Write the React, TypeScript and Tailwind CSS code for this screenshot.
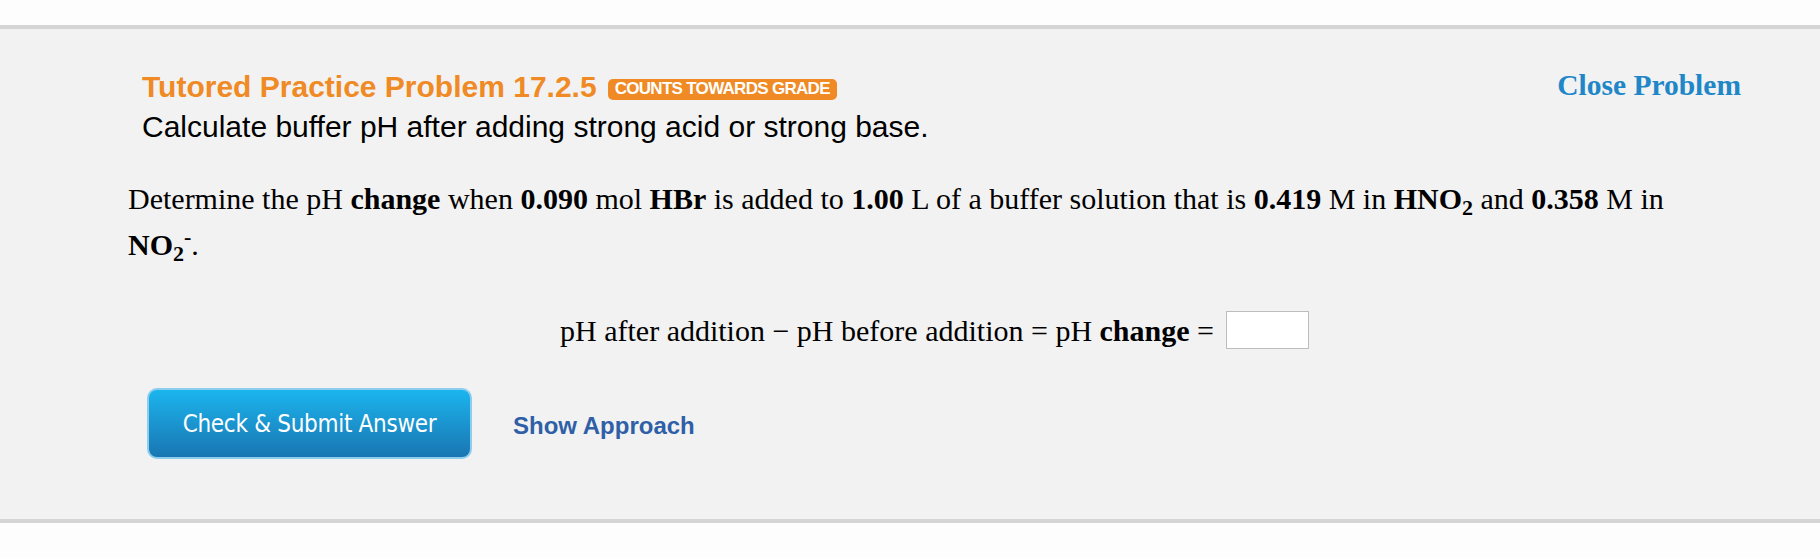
import React from 'react'

// ─────────────────────────────────────────────────────────
// Tutored practice problem panel
// ─────────────────────────────────────────────────────────

const SANS = 'font-["Liberation_Sans",Arial,sans-serif]'
const SERIF = 'font-["Liberation_Serif","Times_New_Roman",serif]'

export default function App() {
  return (
    <div className="min-h-screen bg-[#fdfdfd] pt-[25px]">
      <div className="h-[498px] border-y-4 border-[#d5d5d5] bg-[#f2f2f2]">
        <div className="pl-[128px] pr-[79px] pt-[38px]">
          {/* ── Header ─────────────────────────────── */}
          <div className="flex items-start justify-between">
            <div className={`pl-[14px] ${SANS}`}>
              <div className="flex items-center leading-[40px]">
                <h1 className="text-[30px] font-bold text-[#ef8a24]">
                  Tutored Practice Problem 17.2.5
                </h1>
                <span className="ml-[11px] mt-[4px] inline-flex h-[21px] items-center rounded-[5px] bg-[#ef8a24] px-[7px] text-[17px] font-bold tracking-[-0.7px] text-white">
                  COUNTS TOWARDS GRADE
                </span>
              </div>
              <p className="text-[30px] leading-[40px] text-black">
                Calculate buffer pH after adding strong acid or strong base.
              </p>
            </div>
            <button className={`-mt-[2px] text-[29.5px] font-bold leading-[40px] text-[#1f87c8] ${SERIF}`}>
              Close Problem
            </button>
          </div>

          {/* ── Problem statement ───────────────────── */}
          <p className={`mt-[29px] pr-[60px] text-[30px] leading-[46px] text-black ${SERIF}`}>
            Determine the pH <b>change</b> when <b>0.090</b> mol <b>HBr</b> is added to{' '}
            <b>1.00</b> L of a buffer solution that is <b>0.419</b> M in{' '}
            <b>
              HNO<sub className="text-[22px] leading-none">2</sub>
            </b>{' '}
            and <b>0.358</b> M in{' '}
            <b>
              NO<sub className="text-[22px] leading-none">2</sub>
              <sup className="text-[22px] leading-none">-</sup>
            </b>
            .
          </p>

          {/* ── Answer line ─────────────────────────── */}
          <div className={`mt-[43px] flex h-[38px] items-center justify-center text-[30px] text-black ${SERIF}`}>
            <span>
              pH after addition − pH before addition = pH <b>change</b> =
            </span>
            <input
              type="text"
              className="ml-[12px] h-[38px] w-[83px] border border-[#bdbdbd] bg-white outline-none"
            />
          </div>

          {/* ── Actions ─────────────────────────────── */}
          <div className="mt-[39px] flex items-center pl-[19px]">
            <button className='h-[71px] w-[325px] rounded-[10px] border-2 border-[#8dcdee] bg-gradient-to-b from-[#1bb5ee] to-[#1976b2] font-["DejaVu_Sans_Condensed","DejaVu_Sans",Tahoma,sans-serif] text-[24px] tracking-[-0.3px] text-white'>
              Check &amp; Submit Answer
            </button>
            <a className={`ml-[41px] mt-[4px] text-[24px] font-bold text-[#2f5fa7] ${SANS}`}>
              Show Approach
            </a>
          </div>
        </div>
      </div>
    </div>
  )
}
